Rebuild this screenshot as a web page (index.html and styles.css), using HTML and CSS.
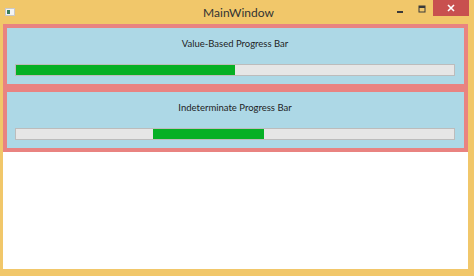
FILE: index.html
```html
<!DOCTYPE html>
<html lang="en">
<head>
    <meta charset="UTF-8">
    <title>MainWindow</title>
    <link rel="stylesheet" href="styles.css">
</head>
<body>
    <div class="window">
        <div class="titlebar">
            <div class="app-icon">
                <svg width="10" height="8" viewBox="0 0 10 8">
                    <rect x="0.5" y="0.5" width="9" height="7" fill="#f4f4f4" stroke="#c9c9c9"/>
                    <rect x="2" y="2" width="3" height="4" fill="#3b7d5a"/>
                </svg>
            </div>
            <div class="title">MainWindow</div>
            <div class="controls">
                <div class="ctl min">
                    <svg width="8" height="4" viewBox="0 0 8 4"><rect x="1" y="1" width="6" height="2" fill="#3a3a3a"/></svg>
                </div>
                <div class="ctl max">
                    <svg width="8" height="8" viewBox="0 0 8 8">
                        <rect x="1" y="1" width="6" height="6" fill="none" stroke="#3a3a3a" stroke-width="1"/>
                        <rect x="1" y="1" width="6" height="2" fill="#3a3a3a"/>
                    </svg>
                </div>
                <div class="ctl close">
                    <svg width="8" height="8" viewBox="0 0 8 8">
                        <path d="M1 1 L7 7 M7 1 L1 7" stroke="#fff" stroke-width="1.6"/>
                    </svg>
                </div>
            </div>
        </div>
        <div class="client">
            <div class="panel">
                <div class="label">Value-Based Progress Bar</div>
                <div class="track">
                    <div class="fill" style="width: 50%"></div>
                </div>
            </div>
            <div class="panel">
                <div class="label">Indeterminate Progress Bar</div>
                <div class="track">
                    <div class="fill indeterminate"></div>
                </div>
            </div>
        </div>
    </div>
</body>
</html>
```

FILE: styles.css
```css
*{
    margin: 0;
    padding: 0;
    box-sizing: border-box;
}
body{
    background-color: #f1c76a;
    font-family: Lato, "Noto Sans", sans-serif;
}
.window{
    width: 474px;
    height: 276px;
    background-color: #f1c76a;
    padding: 0 6px 7px 3px;
    display: flex;
    flex-direction: column;
}
.titlebar{
    height: 24px;
    display: flex;
    align-items: flex-start;
    position: relative;
}
.app-icon{
    margin: 8px 0 0 2px;
    display: flex;
}
.title{
    position: absolute;
    left: 0;
    right: -6px;
    top: 4px;
    text-align: center;
    font-size: 12px;
    color: #333;
    line-height: 17px;
}
.controls{
    margin-left: auto;
    display: flex;
    margin-right: -1px;
}
.ctl{
    display: flex;
    justify-content: center;
}
.min{
    width: 22px;
    padding-top: 10px;
}
.max{
    width: 22px;
    padding-top: 5px;
}
.close{
    width: 36px;
    height: 16px;
    background-color: #c8504f;
    align-items: center;
}
.client{
    flex: 1;
    background-color: #fff;
}
.panel{
    border: 4px solid #e98381;
    background-color: #add8e6;
    height: 64px;
    padding: 8px 9px 0 8px;
}
.label{
    text-align: center;
    font-size: 9.5px;
    line-height: 16px;
    color: #1e1e1e;
    margin-bottom: 12px;
}
.track{
    height: 12px;
    border: 1px solid #bcbcbc;
    background-color: #e6e6e6;
    display: flex;
}
.fill{
    background-color: #06b025;
    height: 100%;
}
.indeterminate{
    margin-left: 137px;
    width: 111px;
}
```
